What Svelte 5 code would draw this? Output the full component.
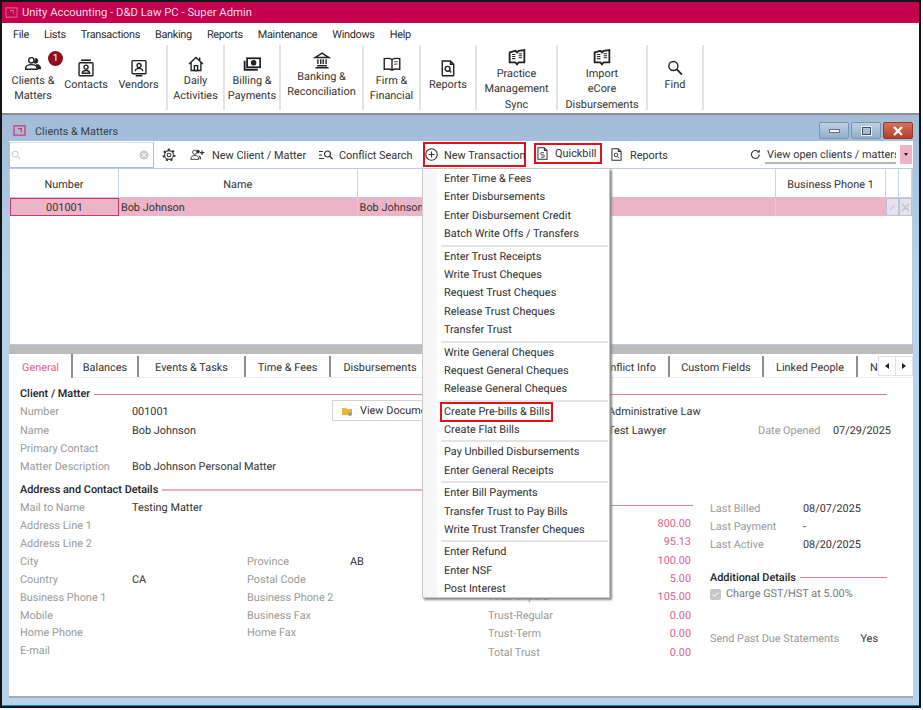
<script lang="ts">
    type Item = { label: string[]; icon: string; width: number; top: number; end?: boolean };

    const menus = ["File", "Lists", "Transactions", "Banking", "Reports", "Maintenance", "Windows", "Help"];

    const ribbon: Item[] = [
        { label: ["Clients &", "Matters"], icon: "people", width: 56, top: 10 },
        { label: ["Contacts"], icon: "contact", width: 50, top: 14 },
        { label: ["Vendors"], icon: "contact2", width: 57, top: 14, end: true },
        { label: ["Daily", "Activities"], icon: "house", width: 57, top: 10, end: true },
        { label: ["Billing &", "Payments"], icon: "money", width: 56, top: 10, end: true },
        { label: ["Banking &", "Reconciliation"], icon: "bank", width: 83, top: 6, end: true },
        { label: ["Firm &", "Financial"], icon: "book", width: 57, top: 10, end: true },
        { label: ["Reports"], icon: "report", width: 56, top: 14, end: true },
        { label: ["Practice", "Management", "Sync"], icon: "sync", width: 81, top: 3, end: true },
        { label: ["Import", "eCore", "Disbursements"], icon: "sync", width: 90, top: 3, end: true },
        { label: ["Find"], icon: "search", width: 56, top: 14, end: true },
    ];

    const icons: Record<string, string> = {
        people: `<path d="M14 4.200a3 3 0 0 1 0 6c-1 0-1.500-.5-1.500-.5zM15 11.500c3.500 0 5.500 2 5.500 5.500h-4c0-2.500-.5-4-1.500-5.500z" fill="#222" stroke-width="1"/><circle cx="9" cy="6.500" r="3.300"/><path d="M2 17.500v-1c0-3 2.500-4.700 7-4.700s7 1.700 7 4.700v1z"/>`,
        contact: `<rect x="2.500" y="4.500" width="17" height="16" rx="1"/><path d="M5 1.500h12" stroke-width="2"/><circle cx="11" cy="10" r="2.500"/><path d="M6.500 17.500c0-2.500 2-3.500 4.500-3.500s4.500 1 4.500 3.500z"/>`,
        contact2: `<rect x="2.500" y="2" width="17" height="16" rx="1"/><circle cx="11" cy="8" r="2.500"/><path d="M6.500 15c0-2.500 2-3.500 4.500-3.500s4.500 1 4.500 3.500M7 20.500h8"/>`,
        house: `<path d="M2.500 11 11 3l8.500 8M5 9v10h12V9M15.500 3v3.500"/><rect x="9" y="13" width="4" height="6"/>`,
        money: `<rect x="5" y="4" width="16" height="11" stroke-width="2.200"/><path d="M2 7v11h16" stroke-width="2.200"/><circle cx="13" cy="9.500" r="2.600" fill="#222"/>`,
        bank: `<path d="M2.500 8 11 2.500 19.500 8zM3 20.500h16M5 18h12M6 10v6M9.500 10v6M12.500 10v6M16 10v6"/>`,
        book: `<path d="M11 5.500C9 4 5.500 3.800 1.500 4.500v13c4-.7 7.500-.5 9.500 1 2-1.500 5.500-1.700 9.500-1v-13c-4-.7-7.500-.5-9.500 1zM11 5.500v13"/><path d="M13.500 8.500c1.500-.5 3-.6 4.500-.5M13.500 11.500c1.500-.5 3-.6 4.500-.5" stroke-width="1"/>`,
        report: `<path d="M4 2.500h10l4 4v13.500a.5.5 0 0 1-.5.500h-13a.5.500 0 0 1-.5-.500zM14 2.500v4h4"/><circle cx="10.500" cy="12" r="3"/><path d="m12.700 14.200 2.300 2.300"/>`,
        sync: `<path d="M2 5.500v12h7l2 2.500 2-2.500h7v-15l-7 1-2 2-2-2z" stroke-width="2.200"/><path d="M5 8h4M5 10.500h4M5 13h4M13 7h4M13 9.500h4M13 12h4" stroke-width="1.300"/>`,
        search: `<circle cx="9" cy="8.500" r="5.500" stroke-width="1.700"/><path d="m13 12.500 6.500 6.500" stroke-width="2.200"/>`,
    };

    const menuGroups = [
        ["Enter Time & Fees", "Enter Disbursements", "Enter Disbursement Credit", "Batch Write Offs / Transfers"],
        ["Enter Trust Receipts", "Write Trust Cheques", "Request Trust Cheques", "Release Trust Cheques", "Transfer Trust"],
        ["Write General Cheques", "Request General Cheques", "Release General Cheques"],
        ["Create Pre-bills & Bills", "Create Flat Bills"],
        ["Pay Unbilled Disbursements", "Enter General Receipts"],
        ["Enter Bill Payments", "Transfer Trust to Pay Bills", "Write Trust Transfer Cheques"],
        ["Enter Refund", "Enter NSF", "Post Interest"],
    ];

    const tabs = [
        { label: "General", width: 63 },
        { label: "Balances", width: 66 },
        { label: "Events & Tasks", width: 107 },
        { label: "Time & Fees", width: 85 },
        { label: "Disbursements", width: 100 },
        { label: "", width: 154 },
        { label: "Conflict Info", width: 85 },
        { label: "Custom Fields", width: 94 },
        { label: "Linked People", width: 94 },
    ];

    const addressRows = [
        ["Address Line 1", "", "", ""],
        ["Address Line 2", "", "", ""],
        ["City", "", "Province", "AB"],
        ["Country", "CA", "Postal Code", ""],
        ["Business Phone 1", "", "Business Phone 2", ""],
        ["Mobile", "", "Business Fax", ""],
        ["Home Phone", "", "Home Fax", ""],
        ["E-mail", "", "", ""],
    ];

    const balances = [
        ["", "800.00"],
        ["", "95.13"],
        ["", "100.00"],
        ["", "5.00"],
        ["Total Unpaid", "105.00"],
        ["Trust-Regular", "0.00"],
        ["Trust-Term", "0.00"],
        ["Total Trust", "0.00"],
    ];
</script>

{#snippet icon(name: string)}
    <svg class="rib-icon" viewBox="0 0 22 22" width="18" height="18">{@html icons[name]}</svg>
{/snippet}

<div class="screen">
    <div class="frame">
        <header class="titlebar">
            <svg class="logo" viewBox="0 0 14 12" width="13" height="11">
                <path d="M3 1H1v10h2M1 1h12v10H3M5 4h4v4" fill="none" stroke="#dc5a8a" stroke-width="1.200" />
            </svg>
            <span>Unity Accounting - D&amp;D Law PC - Super Admin</span>
        </header>

        <nav class="menubar">
            {#each menus as m}
                <span>{m}</span>
            {/each}
        </nav>

        <div class="ribbon">
            {#each ribbon as item, i}
                <div class="rib-item" class:end={item.end} style="width: {item.width}px; padding-top: {item.top}px">
                    {@render icon(item.icon)}
                    {#each item.label as line}
                        <span>{line}</span>
                    {/each}
                    {#if i === 0}
                        <b class="badge">1</b>
                    {/if}
                </div>
            {/each}
        </div>

        <main class="mdi">
            <div class="child-title">
                <svg viewBox="0 0 14 12" width="13" height="11">
                    <path d="M3 1H1v10h2M1 1h12v10H3M5 4h4v4" fill="none" stroke="#d8336f" stroke-width="1.400" />
                </svg>
                <span class="child-name">Clients &amp; Matters</span>
                <div class="win-btns">
                    <div class="win-btn"><i class="min"></i></div>
                    <div class="win-btn"><i class="max"></i></div>
                    <div class="win-btn close">
                        <svg viewBox="0 0 12 10" width="12" height="10"><path d="m2 1 8 8M10 1 2 9" stroke="#fff" stroke-width="2.400" /></svg>
                    </div>
                </div>
            </div>

            <div class="toolbar">
                <div class="search">
                    <svg viewBox="0 0 12 12" width="10" height="10"><circle cx="5" cy="5" r="3.500" fill="none" stroke="#ccc" stroke-width="1.300" /><path d="m8 8 3 3" stroke="#ccc" stroke-width="1.300" /></svg>
                    <svg viewBox="0 0 10 10" width="10" height="10"><circle cx="5" cy="5" r="4.500" fill="#ccc" /><path d="m3 3 4 4M7 3 3 7" stroke="#fff" /></svg>
                </div>
                <button class="tool gear" aria-label="Settings">
                    <svg viewBox="0 0 16 16" width="14" height="14"><circle cx="8" cy="8" r="2.100" fill="none" stroke="#333" stroke-width="1.200" /><circle cx="8" cy="8" r="5" fill="none" stroke="#333" stroke-width="1.200" /><circle cx="8" cy="8" r="6.300" fill="none" stroke="#333" stroke-width="2.200" stroke-dasharray="2.400 3.100" /></svg>
                </button>
                <button class="tool new-client">
                    <svg viewBox="0 0 16 12" width="15" height="11"><circle cx="8.500" cy="2.800" r="2" fill="#333" /><circle cx="5" cy="3.500" r="2.300" fill="#fff" stroke="#333" /><path d="M.7 11.300c0-3 1.700-4.300 4.300-4.300s4.300 1.300 4.300 4.300z" fill="#fff" stroke="#333" /><path d="M10.500 11.300c0-2-.5-3.300-1.500-4.300 2 0 3 1.500 3 4.300z" fill="#333" /><path d="M13 1.500v5M10.500 4h5" stroke="#333" stroke-width="1.300" /></svg>
                    <span>New Client / Matter</span>
                </button>
                <button class="tool conflict">
                    <svg viewBox="0 0 14 10" width="14" height="10"><path d="M0 1.500h4M0 5h3M0 8.500h5" stroke="#333" /><circle cx="8.500" cy="4" r="3" fill="none" stroke="#333" stroke-width="1.200" /><path d="m10.500 6 3 3" stroke="#333" stroke-width="1.400" /></svg>
                    <span>Conflict Search</span>
                </button>
                <button class="tool new-tx red">
                    <svg viewBox="0 0 13 13" width="13" height="13"><circle cx="6.500" cy="6.500" r="5.700" fill="none" stroke="#333" stroke-width="1.100" /><path d="M6.500 3.500v6M3.500 6.500h6" stroke="#333" stroke-width="1.100" /></svg>
                    <span>New Transaction</span>
                </button>
                <button class="tool quick red">
                    <svg viewBox="0 0 12 14" width="11" height="13"><path d="M1 .7h7l3 3v9.600H1zM8 .7v3h3" fill="none" stroke="#333" stroke-width="1.100" /><path d="M7.500 6H5.200a1 1 0 0 0 0 2.500h1.600a1 1 0 0 1 0 2.500H4.500" fill="none" stroke="#333" /></svg>
                    <span>Quickbill</span>
                </button>
                <button class="tool reports">
                    <svg viewBox="0 0 12 14" width="11" height="13"><path d="M1 .7h7l3 3v9.600H1zM8 .7v3h3" fill="none" stroke="#333" stroke-width="1.100" /><circle cx="5.500" cy="7.500" r="2" fill="none" stroke="#333" /><path d="m7 9 1.800 1.800" stroke="#333" /></svg>
                    <span>Reports</span>
                </button>
                <svg class="refresh" viewBox="0 0 12 12" width="11" height="11"><path d="M10.200 6a4.300 4.300 0 1 1-1.300-3.100" fill="none" stroke="#333" stroke-width="1.200" /><path d="M10.700 .6v3.200H7.500z" fill="#333" /></svg>
                <div class="view-select"><span>View open clients / matters</span></div>
                <div class="drop-btn"><i></i></div>
            </div>

            <div class="table">
                <div class="thead">
                    <div class="c-num">Number</div>
                    <div class="c-name">Name</div>
                    <div class="c-rest"></div>
                    <div class="c-phone">Business Phone 1</div>
                    <div class="c-act"></div>
                    <div class="c-act"></div>
                </div>
                <div class="trow">
                    <div class="c-num focus">001001</div>
                    <div class="c-name left">Bob Johnson</div>
                    <div class="c-rest left">Bob Johnson</div>
                    <div class="c-phone"></div>
                    <div class="c-act tag">
                        <svg viewBox="0 0 10 10" width="9" height="9"><path d="m1 9 1-3 4-4 2 2-4 4z" fill="#cdd8e4" /></svg>
                    </div>
                    <div class="c-act tag">
                        <svg viewBox="0 0 10 10" width="9" height="9"><path d="m1 1 8 8M9 1 1 9" stroke="#bccada" stroke-width="2" /></svg>
                    </div>
                </div>
            </div>

            <div class="splitter"></div>

            <div class="tabbar">
                {#each tabs as t, i}
                    <div class="tab" class:active={i === 0} style="width: {t.width}px">{t.label}</div>
                {/each}
                <div class="tab last">N</div>
                <div class="tab-arrows">
                    <div class="arrow"><i class="l"></i></div>
                    <div class="arrow"><i class="r"></i></div>
                </div>
            </div>

            <section class="details">
                <div class="heading top"><b>Client / Matter</b><i></i></div>
                <div class="upper">
                    <span class="lbl">Number</span>
                    <span>001001</span>
                    <div class="doc-cell">
                        <div class="doc-btn">
                            <svg viewBox="0 0 12 12" width="12" height="12"><path d="M1 3h4l1 1h5v6H1z" fill="#f2b233" /><circle cx="9" cy="9" r="2" fill="#9b9b9b" /></svg>
                            View Documents
                        </div>
                    </div>
                    <span>Administrative Law</span>
                    <span></span>
                    <span></span>

                    <span class="lbl">Name</span>
                    <span>Bob Johnson</span>
                    <span></span>
                    <span>Test Lawyer</span>
                    <span class="lbl">Date Opened</span>
                    <span>07/29/2025</span>

                    <span class="lbl">Primary Contact</span>
                    <span></span><span></span><span></span><span></span><span></span>

                    <span class="lbl">Matter Description</span>
                    <span class="wide">Bob Johnson Personal Matter</span>
                </div>

                <div class="lower">
                    <div class="col-address">
                        <div class="heading"><b>Address and Contact Details</b><i class="thick"></i></div>
                        <div class="rows-address">
                            <span class="lbl">Mail to Name</span>
                            <span class="mail">Testing Matter</span>
                            {#each addressRows as r}
                                <span class="lbl">{r[0]}</span>
                                <span>{r[1]}</span>
                                <span class="lbl">{r[2]}</span>
                                <span>{r[3]}</span>
                            {/each}
                        </div>
                    </div>

                    <div class="col-balance">
                        <div class="rule"></div>
                        {#each balances as b}
                            <div class="bal-row">
                                <span class="lbl">{b[0]}</span>
                                <span class="amount">{b[1]}</span>
                            </div>
                        {/each}
                    </div>

                    <div class="col-dates">
                        <div class="date-row"><span class="lbl">Last Billed</span><span>08/07/2025</span></div>
                        <div class="date-row"><span class="lbl">Last Payment</span><span>-</span></div>
                        <div class="date-row"><span class="lbl">Last Active</span><span>08/20/2025</span></div>
                        <div class="heading extra"><b>Additional Details</b><i></i></div>
                        <div class="charge">
                            <span class="check">
                                <svg viewBox="0 0 10 10" width="9" height="9"><path d="m2 5 2 2 4-4" fill="none" stroke="#f2f2f2" stroke-width="1.200" /></svg>
                            </span>
                            <span class="lbl dark">Charge GST/HST at 5.00%</span>
                        </div>
                        <div class="past-due"><span class="lbl">Send Past Due Statements</span><span>Yes</span></div>
                    </div>
                </div>
            </section>

            <div class="popup">
                {#each menuGroups as group, g}
                    {#if g > 0}<div class="sep"></div>{/if}
                    {#each group as entry}
                        <div class="entry" class:boxed={entry === "Create Pre-bills & Bills"}>{entry}</div>
                    {/each}
                {/each}
            </div>
        </main>
    </div>
</div>

<style>
    :global(body) {
        margin: 0;
        background: #fff;
    }

    .screen {
        width: 923px;
        height: 710px;
        overflow: hidden;
        font-family: Roboto, "Open Sans", sans-serif;
        font-size: 10.9px;
        text-rendering: geometricPrecision;
        color: #333;
    }

    .frame {
        width: 917px;
        height: 704px;
        border: 2px solid #141414;
        display: flex;
        flex-direction: column;
    }

    .titlebar {
        height: 21px;
        background: #c4004f;
        color: #f6dbe5;
        display: flex;
        align-items: center;
        gap: 4px;
        padding-left: 3px;
        font-size: 11.300px;
    }

    .menubar {
        height: 22px;
        display: flex;
        align-items: center;
        gap: 15px;
        padding-left: 11px;
        background: #fff;
        color: #2b2b2b;
        letter-spacing: -0.3px;
    }

    .ribbon {
        height: 68px;
        padding-left: 3px;
        display: flex;
        background: #fff;
        border-bottom: 2px solid #8d8d8d;
    }

    .rib-item {
        position: relative;
        box-sizing: border-box;
        display: flex;
        flex-direction: column;
        align-items: center;
        margin-bottom: 3px;
        line-height: 15.300px;
        white-space: nowrap;
    }

    .rib-item.end {
        border-right: 2px solid #e3e3e3;
    }

    .rib-icon {
        flex: none;
        fill: none;
        stroke: #222;
        stroke-width: 1.700;
    }

    .badge {
        position: absolute;
        top: 6px;
        left: 43px;
        width: 15px;
        height: 15px;
        border-radius: 50%;
        background: #8b0f1f;
        color: #fff;
        font-weight: 400;
        font-size: 10px;
        line-height: 15px;
        text-align: center;
    }

    .mdi {
        position: relative;
        flex: 1;
        display: flex;
        flex-direction: column;
        padding: 0 6px 7px 7px;
        background: linear-gradient(#a2bcd8, #b6d4f0 30%);
        border-bottom: 1px solid #1f8aa8;
        min-height: 0;
    }

    .child-title {
        height: 26px;
        box-sizing: border-box;
        padding: 5px 0 0 4px;
        flex: none;
        display: flex;
        align-items: center;
        gap: 9px;
    }

    .child-name {
        flex: 1;
        color: #38404a;
        padding-top: 1px;
    }

    .win-btns {
        display: flex;
        gap: 2px;
    }

    .win-btn {
        width: 30px;
        height: 17px;
        box-sizing: border-box;
        border: 1px solid #7b93ad;
        border-radius: 2px;
        background: linear-gradient(#bdd0e4, #94aec9);
        display: flex;
        align-items: center;
        justify-content: center;
    }

    .win-btn.close {
        background: linear-gradient(#d4725c, #b83d2a);
        border-color: #8e3a2c;
    }

    .win-btn .min {
        width: 9px;
        height: 2px;
        background: #f2f6fa;
        outline: 1px solid #5f7288;
    }

    .win-btn .max {
        width: 7px;
        height: 6px;
        border: 1px solid #3f4e60;
        outline: 1px solid #eef3f8;
    }

    .toolbar {
        height: 27px;
        flex: none;
        display: flex;
        align-items: center;
        background: #fff;
        position: relative;
    }

    .search {
        width: 145px;
        height: 26px;
        box-sizing: border-box;
        flex: none;
        display: flex;
        align-items: center;
        justify-content: space-between;
        padding: 0 4px 0 1px;
        border: 1px solid #a8bfd8;
        border-top-color: #d8d8d8;
        background: #fff;
    }

    .tool {
        flex: none;
        display: flex;
        align-items: center;
        box-sizing: border-box;
        border: 0;
        background: none;
        padding: 0;
        font: inherit;
        color: inherit;
        white-space: nowrap;
    }

    .tool svg {
        flex: none;
    }

    .tool span {
        padding-top: 1px;
    }

    .gear {
        margin-left: 8px;
    }

    .new-client {
        width: 116px;
        margin-left: 14px;
        gap: 7px;
    }

    .conflict {
        width: 92px;
        margin-left: 13px;
        gap: 6px;
    }

    .red {
        border: 2px solid #e2111c;
    }

    .new-tx {
        margin-left: 12px;
        width: 103px;
        height: 25px;
        gap: 6px;
    }

    .quick {
        margin-left: 8px;
        width: 68px;
        height: 21px;
        gap: 7px;
        padding-left: 1px;
        margin-top: -3px;
    }

    .reports {
        margin-left: 9px;
        gap: 8px;
    }

    .refresh {
        margin-left: auto;
    }

    .view-select {
        margin-left: 4px;
        width: 131px;
        height: 19px;
        box-sizing: border-box;
        border-bottom: 2px solid #b5b5b5;
        overflow: hidden;
        white-space: nowrap;
        line-height: 19px;
    }

    .view-select span {
        margin-left: 2px;
    }

    .drop-btn {
        width: 12px;
        height: 19px;
        margin: 0 1px 0 4px;
        background: #ecb4c6;
        display: flex;
        align-items: center;
        justify-content: center;
    }

    .drop-btn i {
        border: 2.500px solid transparent;
        border-top: 3px solid #222;
        border-bottom: 0;
    }

    .table {
        height: 177px;
        flex: none;
        background: #fff;
        box-sizing: border-box;
        border: 1px solid #b5cde6;
    }

    .thead,
    .trow {
        display: flex;
        white-space: nowrap;
    }

    .thead {
        height: 28px;
    }

    .thead > div {
        display: flex;
        align-items: center;
        justify-content: center;
        padding-top: 2px;
        border-right: 1px solid #c4d6ea;
        box-sizing: border-box;
    }

    .trow {
        height: 19px;
        background: #ecb4c6;
        border-top: 1px solid #d5c2d8;
        box-sizing: border-box;
    }

    .trow > div {
        display: flex;
        align-items: center;
        box-sizing: border-box;
        overflow: hidden;
    }

    .trow .left {
        padding-left: 2px;
        border-right: 1px solid #dccadb;
    }

    .c-num {
        width: 109px;
        justify-content: center;
    }

    .focus {
        border: 1px solid #c9386c;
    }

    .c-name {
        width: 239px;
    }

    .c-rest {
        width: 419px;
    }

    .c-phone {
        width: 110px;
    }

    .c-act {
        width: 13px;
    }

    .tag {
        justify-content: center;
        background: #e9e0ea;
        border: 1px solid #b3c6de;
    }

    .splitter {
        height: 9px;
        flex: none;
        background: #bcbcbc;
    }

    .tabbar {
        position: relative;
        height: 24px;
        flex: none;
        display: flex;
        background: #fff;
        box-sizing: border-box;
        border-bottom: 1px solid #eee;
        padding-left: 1px;
    }

    .tab {
        flex: none;
        box-sizing: border-box;
        margin-top: 2px;
        padding-top: 2px;
        border-right: 2px solid #8f8f8f;
        display: flex;
        align-items: center;
        justify-content: center;
        white-space: nowrap;
    }

    .tab.active {
        color: #e0608a;
        background: #fff;
        margin-bottom: -1px;
        margin-top: 0;
    }

    .tab.last {
        flex: 1;
        justify-content: flex-start;
        padding-left: 12px;
        border-right: 0;
    }

    .tab-arrows {
        position: absolute;
        right: 0;
        top: 2px;
        display: flex;
        background: #fff;
    }

    .arrow {
        width: 16px;
        height: 18px;
        border: 1px solid #e3e3e3;
        margin-left: -1px;
        display: flex;
        align-items: center;
        justify-content: center;
    }

    .arrow i {
        border: 3.500px solid transparent;
    }

    .arrow .l {
        border-right: 4px solid #222;
        border-left: 0;
    }

    .arrow .r {
        border-left: 4px solid #222;
        border-right: 0;
    }

    .details {
        flex: 1;
        min-height: 0;
        background: #fff;
        padding: 7px 26px 0 11px;
        border-bottom: 2px solid #a9a9a9;
        line-height: 18.300px;
    }

    .heading {
        display: flex;
        align-items: center;
        gap: 4px;
        white-space: nowrap;
        color: #1c1c1c;
    }

    .heading b {
        font-weight: 500;
    }

    .heading i {
        flex: 1;
        height: 1px;
        background: #e57c9f;
    }

    .heading i.thick {
        height: 2px;
        background: #ebacc1;
    }

    .upper {
        display: grid;
        grid-template-columns: 112px 200px 276px 150px 75px 1fr;
        grid-auto-rows: 18.400px;
        white-space: nowrap;
    }

    .wide {
        grid-column: 2 / -1;
    }

    .lbl {
        color: #9a9a9a;
    }

    .lbl.dark {
        color: #777;
    }

    .doc-cell {
        position: relative;
    }

    .doc-btn {
        position: absolute;
        top: -3px;
        left: 0;
        width: 115px;
        height: 21px;
        box-sizing: border-box;
        border: 1px solid #d4d4d4;
        display: flex;
        align-items: center;
        gap: 7px;
        padding-left: 8px;
    }

    .lower {
        display: flex;
        margin-top: 4px;
    }

    .col-address {
        width: 468px;
        flex: none;
    }

    .rows-address {
        display: grid;
        grid-template-columns: 112px 115px 103px 1fr;
        grid-auto-rows: 17.900px;
        white-space: nowrap;
    }

    .mail {
        grid-column: 2 / -1;
    }

    .col-balance {
        width: 205px;
        flex: none;
        padding-top: 24px;
    }

    .rule {
        height: 1px;
        background: #e57c9f;
        margin-bottom: 9px;
    }

    .bal-row {
        display: flex;
        justify-content: space-between;
        height: 18.400px;
        padding-right: 2px;
    }

    .amount {
        color: #e0608a;
    }

    .col-dates {
        flex: 1;
        margin-left: 17px;
        padding-top: 19px;
    }

    .date-row {
        display: grid;
        grid-template-columns: 93px 1fr;
    }

    .extra {
        margin-top: 14px;
    }

    .charge {
        display: flex;
        align-items: center;
        gap: 5px;
        margin-top: -2px;
    }

    .check {
        width: 11px;
        height: 11px;
        border-radius: 2px;
        background: #c6c6c6;
        display: flex;
        align-items: center;
        justify-content: center;
    }

    .past-due {
        display: flex;
        justify-content: space-between;
        padding-right: 9px;
        margin-top: 27px;
    }

    .popup {
        position: absolute;
        top: 53px;
        left: 420px;
        width: 188px;
        height: 430px;
        box-sizing: border-box;
        padding: 1px 1px 0 21px;
        background: linear-gradient(90deg, #f6f6f6 14px, #fff 14px);
        border: 1px solid #c9c9c9;
        box-shadow: 2px 2px 2px #8a8a8a;
        white-space: nowrap;
    }

    .entry {
        height: 18.400px;
        line-height: 18.400px;
        color: #2f2f2f;
    }

    .entry.boxed {
        outline: 2px solid #e2111c;
        outline-offset: -1px;
        margin: 0 56px 0 -3px;
        padding-left: 3px;
    }

    .sep {
        height: 2px;
        margin: 1px 0 1px -3px;
        background: #e4e4e4;
    }
</style>
